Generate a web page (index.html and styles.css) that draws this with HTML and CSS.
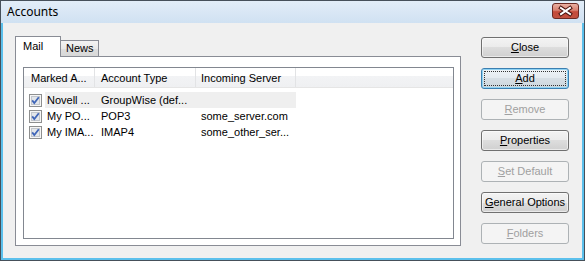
FILE: index.html
```html
<!DOCTYPE html>
<html>
<head>
<meta charset="utf-8">
<title>Accounts</title>
<link rel="stylesheet" href="styles.css">
</head>
<body>
<div class="window">
  <div class="titlebar">
    <span class="title">Accounts</span>
    <span class="tb-close">
      <svg width="27" height="16" viewBox="0 0 27 16">
        <path d="M9 5 L18 11 M18 5 L9 11" stroke="#4a1410" stroke-width="4" stroke-linecap="square" fill="none"/>
        <path d="M9 5 L18 11 M18 5 L9 11" stroke="#ffffff" stroke-width="2" stroke-linecap="square" fill="none"/>
      </svg>
    </span>
  </div>
  <div class="client">
    <div class="tabs-area">
      <div class="tabstrip">
        <div class="tab tab-active">Mail</div>
        <div class="tab tab-inactive">News</div>
      </div>
      <div class="panel">
        <div class="list">
          <div class="list-header">
            <div class="hcell hc1">Marked A...</div>
            <div class="hcell hc2">Account Type</div>
            <div class="hcell hc3">Incoming Server</div>
            <div class="hcell hfill"></div>
          </div>
          <div class="rows">
            <div class="row">
              <span class="chk"><svg width="13" height="13" viewBox="0 0 13 13"><rect x="0.5" y="0.5" width="12" height="12" fill="#f6f6f6" stroke="#8e8f8f"/><rect x="2.5" y="2.5" width="8" height="8" fill="#e3e6ea" stroke="#c2c6cc"/><path d="M3.2 6.4 L5.3 9 L9.8 3.3" stroke="#4066b8" stroke-width="1.8" fill="none"/></svg></span>
              <div class="item item-selected">
                <span class="cell cname">Novell ...</span>
                <span class="cell ctype">GroupWise (def...</span>
                <span class="cell cserver"></span>
              </div>
            </div>
            <div class="row">
              <span class="chk"><svg width="13" height="13" viewBox="0 0 13 13"><rect x="0.5" y="0.5" width="12" height="12" fill="#f6f6f6" stroke="#8e8f8f"/><rect x="2.5" y="2.5" width="8" height="8" fill="#e3e6ea" stroke="#c2c6cc"/><path d="M3.2 6.4 L5.3 9 L9.8 3.3" stroke="#4066b8" stroke-width="1.8" fill="none"/></svg></span>
              <div class="item">
                <span class="cell cname">My PO...</span>
                <span class="cell ctype">POP3</span>
                <span class="cell cserver">some_server.com</span>
              </div>
            </div>
            <div class="row">
              <span class="chk"><svg width="13" height="13" viewBox="0 0 13 13"><rect x="0.5" y="0.5" width="12" height="12" fill="#f6f6f6" stroke="#8e8f8f"/><rect x="2.5" y="2.5" width="8" height="8" fill="#e3e6ea" stroke="#c2c6cc"/><path d="M3.2 6.4 L5.3 9 L9.8 3.3" stroke="#4066b8" stroke-width="1.8" fill="none"/></svg></span>
              <div class="item">
                <span class="cell cname">My IMA...</span>
                <span class="cell ctype">IMAP4</span>
                <span class="cell cserver">some_other_ser...</span>
              </div>
            </div>
          </div>
        </div>
      </div>
    </div>
    <div class="buttons">
      <button class="btn"><u>C</u>lose</button>
      <button class="btn btn-default"><u>A</u>dd</button>
      <button class="btn btn-disabled"><u>R</u>emove</button>
      <button class="btn"><u>P</u>roperties</button>
      <button class="btn btn-disabled"><u>S</u>et Default</button>
      <button class="btn"><u>G</u>eneral Options</button>
      <button class="btn btn-disabled"><u>F</u>olders</button>
    </div>
  </div>
</div>
</body>
</html>
```

FILE: styles.css
```css
* {
  box-sizing: border-box;
}

html, body {
  margin: 0;
  padding: 0;
  background: #ffffff;
}

.window {
  width: 585px;
  height: 261px;
  border: 1px solid #46505a;
  background: #5cc0ec;
  display: flex;
  flex-direction: column;
}

.titlebar {
  height: 22px;
  flex: none;
  display: flex;
  align-items: flex-start;
  padding-left: 6px;
  background: linear-gradient(#e2edf8, #d0e1f2);
}

.title {
  font-family: "Noto Sans", "Open Sans", sans-serif;
  font-size: 12px;
  line-height: 22px;
  color: #000;
}

.tb-close {
  margin-left: auto;
  margin-top: 2px;
  margin-right: 5px;
  width: 27px;
  height: 16px;
  border: 1px solid #6b2a24;
  border-radius: 3px;
  background: linear-gradient(#eab0a2 0%, #d88070 45%, #c54a3a 55%, #c2503f 100%);
  display: flex;
}

.tb-close svg {
  margin: -1px;
}

.client {
  flex: 1;
  margin: 0 2px 2px 2px;
  background: #f0f0f0;
  display: flex;
  padding: 13px 13px 12px 12px;
  font-family: "Liberation Sans", Arial, sans-serif;
  font-size: 11px;
  color: #000;
}

.tabs-area {
  width: 446px;
  display: flex;
  flex-direction: column;
}

.tabstrip {
  height: 20px;
  display: flex;
  align-items: flex-end;
}

.tab {
  border: 1px solid #898c95;
  border-bottom: none;
  line-height: 13px;
}

.tab-active {
  position: relative;
  z-index: 2;
  width: 46px;
  height: 21px;
  margin-bottom: -1px;
  padding: 3px 0 0 7px;
  background: #ffffff;
}

.tab-inactive {
  width: 39px;
  height: 16px;
  margin-left: -1px;
  padding: 1px 0 0 5px;
  background: linear-gradient(#f3f3f3, #e9e9e9 50%, #dedede 50%, #d8d8d8);
}

.panel {
  height: 190px;
  border: 1px solid #898c95;
  background: #ffffff;
  padding: 10px 6px 6px 7px;
}

.list {
  width: 431px;
  height: 172px;
  border: 1px solid #828790;
  background: #ffffff;
  overflow: hidden;
}

.list-header {
  height: 20px;
  display: flex;
  border-bottom: 1px solid #e5e5e5;
  background: linear-gradient(#ffffff 0%, #ffffff 42%, #f2f3f5 42%, #eff0f2 100%);
}

.hcell {
  line-height: 20px;
  border-right: 1px solid #e2e3e5;
  white-space: nowrap;
}

.hc1 {
  width: 71px;
  padding-left: 7px;
}

.hc2 {
  width: 101px;
  padding-left: 6px;
}

.hc3 {
  width: 100px;
  padding-left: 5px;
}

.hfill {
  flex: 1;
  border-right: none;
}

.rows {
  margin-top: 4px;
}

.row {
  height: 16px;
  display: flex;
  align-items: center;
}

.chk {
  width: 13px;
  height: 13px;
  margin-left: 5px;
  margin-right: 3px;
  display: flex;
}

.item {
  width: 251px;
  height: 16px;
  display: flex;
  line-height: 16px;
}

.item-selected {
  background: #efefef;
}

.cell {
  white-space: nowrap;
  overflow: hidden;
}

.cname {
  width: 50px;
  padding-left: 2px;
}

.ctype {
  width: 101px;
  padding-left: 6px;
}

.cserver {
  width: 100px;
  padding-left: 5px;
}

.buttons {
  margin-left: 20px;
  margin-top: 1px;
  width: 88px;
  display: flex;
  flex-direction: column;
  gap: 10px;
}

.btn {
  width: 88px;
  height: 21px;
  padding: 0;
  border: 1px solid #707070;
  border-radius: 3px;
  background: linear-gradient(#f3f3f3 0%, #ebebeb 50%, #dddddd 50%, #d0d0d0 100%);
  box-shadow: inset 0 0 0 1px rgba(255, 255, 255, 0.55);
  font-family: "Liberation Sans", Arial, sans-serif;
  font-size: 11px;
  line-height: 19px;
  color: #000;
  text-align: center;
}

.btn u {
  text-decoration: underline;
  text-underline-offset: 1px;
}

.btn-default {
  border-color: #3c7fb1;
  box-shadow: inset 0 0 0 1px #8fd3f4;
  background: linear-gradient(#eef3f7 0%, #e4eaef 50%, #d7dfe5 50%, #ccd6de 100%);
  outline: 1px dotted #333;
  outline-offset: -4px;
}

.btn-disabled {
  border-color: #adb2b5;
  background: #f4f4f4;
  box-shadow: none;
  color: #a0a0a0;
}
```
